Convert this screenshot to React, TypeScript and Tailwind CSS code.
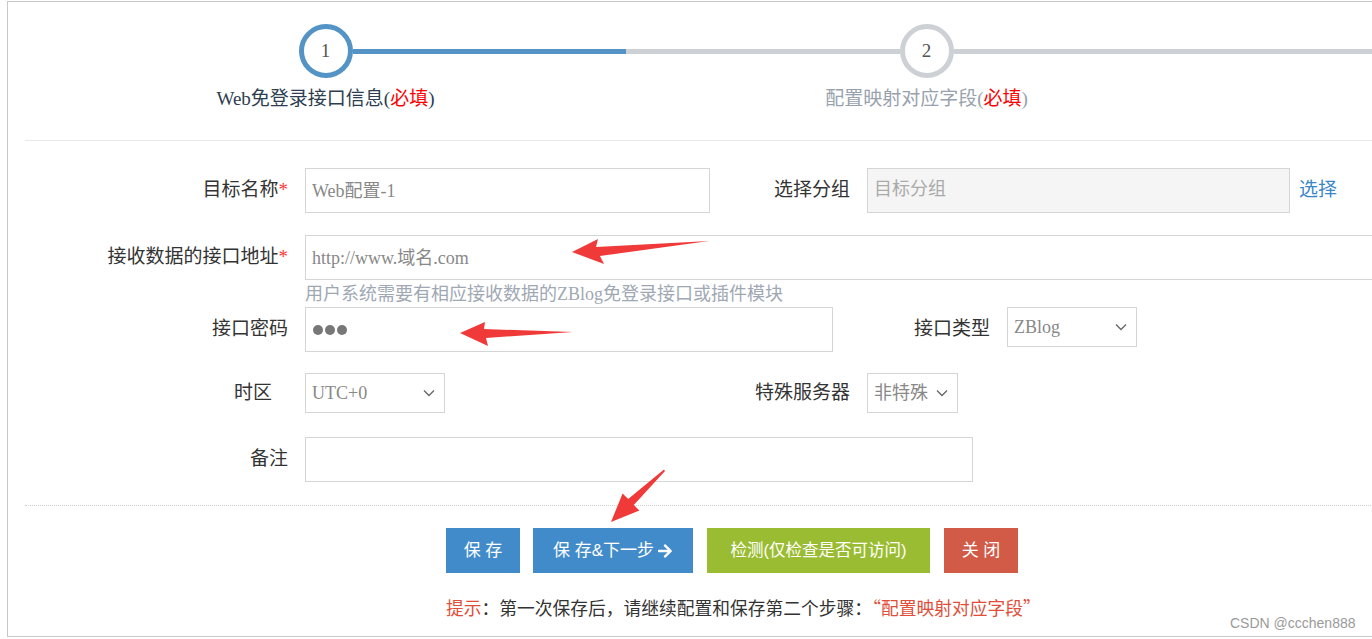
import { FaArrowRight } from 'react-icons/fa';

const steps = [
  { n: 1, label: 'Web免登录接口信息', active: true },
  { n: 2, label: '配置映射对应字段', active: false },
];

function Chevron() {
  return (
    <svg width="12" height="8" viewBox="0 0 12 8" fill="none" stroke="#666" strokeWidth="1.3">
      <path d="M1 1.5l5 5 5-5" />
    </svg>
  );
}

function FakeSelect({ value, className }: { value: string; className: string }) {
  return (
    <div
      className={`flex h-[40px] shrink-0 items-center justify-between border border-[#d5d5d5] bg-white pl-[6px] pr-[9px] text-[18px] text-[#888] ${className}`}
    >
      <span>{value}</span>
      <Chevron />
    </div>
  );
}

function Label({ text, required, className = '' }: { text: string; required?: boolean; className?: string }) {
  return (
    <label className={`shrink-0 text-right text-[19px] text-[#333] ${className}`}>
      {text}
      {required && <span className="text-[#f33]">*</span>}
    </label>
  );
}

export default function App() {
  return (
    <div className="relative h-[639px] w-[1372px] overflow-hidden bg-white font-['Liberation_Serif','Noto_Sans_CJK_SC',serif]">
      <div className="ml-[7px] mt-[1px] h-[636px] w-[1800px] border border-r-0 border-[#c8c8c8] pl-[17px]">
        {/* wizard steps */}
        <div className="flex h-[139px] border-b border-[#e8e8e8] pt-[22px]">
          {steps.map((s, i) => {
            const last = i === steps.length - 1;
            return (
              <div key={s.n} className={`flex flex-col ${last ? 'flex-1' : 'w-[601px] shrink-0'}`}>
                <div className="flex w-full items-center">
                  <div className={`h-[5px] w-[273.5px] shrink-0 ${i === 0 ? '' : 'bg-[#cdd0d4]'}`} />
                  <div
                    className={`flex h-[54px] w-[54px] shrink-0 items-center justify-center rounded-full border-[5px] bg-white text-[19px] text-[#555] ${
                      s.active ? 'border-[#5393c5]' : 'border-[#cdd0d4]'
                    }`}
                  >
                    {s.n}
                  </div>
                  <div className={`h-[5px] flex-1 ${s.active ? 'bg-[#5393c5]' : 'bg-[#cdd0d4]'}`} />
                </div>
                <div
                  className={`mt-[9px] w-[601px] text-center text-[19px] leading-[24px] ${
                    s.active ? 'text-[#2c3e50]' : 'text-[#98a2ad]'
                  }`}
                >
                  {s.label}(<span className="text-[#f00]">必填</span>)
                </div>
              </div>
            );
          })}
        </div>

        {/* form */}
        <div className="pt-[27px]">
          <div className="flex h-[45px] items-center">
            <Label text="目标名称" required className="w-[263px]" />
            <input
              readOnly
              defaultValue="Web配置-1"
              className="ml-[17px] h-[45px] w-[405px] border border-[#d5d5d5] px-[6px] pb-[3px] text-[18px] text-[#888] outline-none"
            />
            <Label text="选择分组" className="w-[140px]" />
            <input
              readOnly
              placeholder="目标分组"
              className="ml-[17px] h-[45px] w-[423px] border border-[#d5d5d5] bg-[#f5f5f5] px-[6px] pb-[3px] text-[18px] outline-none placeholder:text-[#aaa]"
            />
            <a className="ml-[9px] text-[19px] text-[#3a87c8]">选择</a>
          </div>

          <div className="mt-[22px] flex h-[45px] items-center">
            <Label text="接收数据的接口地址" required className="w-[263px]" />
            <input
              readOnly
              defaultValue="http://www.域名.com"
              className="ml-[17px] h-[45px] w-[1100px] border border-[#d5d5d5] px-[6px] pb-[3px] text-[18px] text-[#888] outline-none"
            />
          </div>
          <p className="ml-[280px] mt-[4px] text-[18px] leading-[20px] text-[#a0a8b3]">
            用户系统需要有相应接收数据的ZBlog免登录接口或插件模块
          </p>

          <div className="mt-[3px] flex h-[45px] items-center">
            <Label text="接口密码" className="w-[263px]" />
            <div className="ml-[17px] flex h-[45px] w-[528px] items-center gap-[2px] border border-[#d5d5d5] px-[7px]">
              <span className="h-[10px] w-[10px] rounded-full bg-[#777]" />
              <span className="h-[10px] w-[10px] rounded-full bg-[#777]" />
              <span className="h-[10px] w-[10px] rounded-full bg-[#777]" />
            </div>
            <Label text="接口类型" className="w-[157px]" />
            <FakeSelect value="ZBlog" className="ml-[17px] w-[130px] self-start" />
          </div>

          <div className="mt-[21px] flex h-[40px] items-center">
            <Label text="时区" className="w-[263px] pr-[16px]" />
            <FakeSelect value="UTC+0" className="ml-[17px] w-[140px]" />
            <Label text="特殊服务器" className="w-[405px]" />
            <FakeSelect value="非特殊" className="ml-[17px] w-[91px]" />
          </div>

          <div className="mt-[24px] flex h-[45px] items-center">
            <Label text="备注" className="w-[263px]" />
            <input
              readOnly
              className="ml-[17px] h-[45px] w-[668px] border border-[#d5d5d5] px-[6px] text-[18px] outline-none"
            />
          </div>
        </div>

        <div className="mt-[23px] w-[1400px] border-t border-dotted border-[#d0d0d0]" />

        {/* actions */}
        <div className="ml-[421px] mt-[22px] flex h-[45px] text-[17px] text-white font-['Liberation_Sans','Noto_Sans_CJK_SC',sans-serif]">
          <button className="w-[74px] bg-[#428bca]">保 存</button>
          <button className="ml-[13px] flex w-[160px] items-center justify-center gap-[3px] bg-[#428bca]">
            保 存&amp;下一步
            <FaArrowRight className="h-[16px] w-[16px]" />
          </button>
          <button className="ml-[14px] w-[223px] bg-[#9abc32] text-[16.5px]">检测(仅检查是否可访问)</button>
          <button className="ml-[14px] w-[74px] bg-[#d15b47]">关 闭</button>
        </div>

        <p className="ml-[421px] mt-[22px] text-[17.75px] leading-[24px] text-[#333] font-['Noto_Sans_CJK_SC',sans-serif]">
          <span className="text-[#e04e39]">提示</span>：第一次保存后，请继续配置和保存第二个步骤：
          <span className="text-[#e04e39]">“配置映射对应字段”</span>
        </p>
      </div>

      {/* annotation arrows */}
      <svg className="pointer-events-none absolute left-0 top-0" width="1372" height="639">
        <polygon fill="#f03a3a" points="572,252 598,239 596,247 709,241 600,256 604,264" />
        <polygon fill="#f03a3a" points="460,333 485,322 484,329 573,332 486,338 488,346" />
        <polygon
          fill="#f03a3a"
          points="611,522 622.6,493.4 628.2,499.1 664,469.5 665,471 633.8,504.9 639.4,510.6"
        />
      </svg>

      <div className="absolute left-[1230px] top-[613px] text-[14px] text-[#9a9a9a] font-['Liberation_Sans',sans-serif]">
        CSDN @ccchen888
      </div>
    </div>
  );
}
